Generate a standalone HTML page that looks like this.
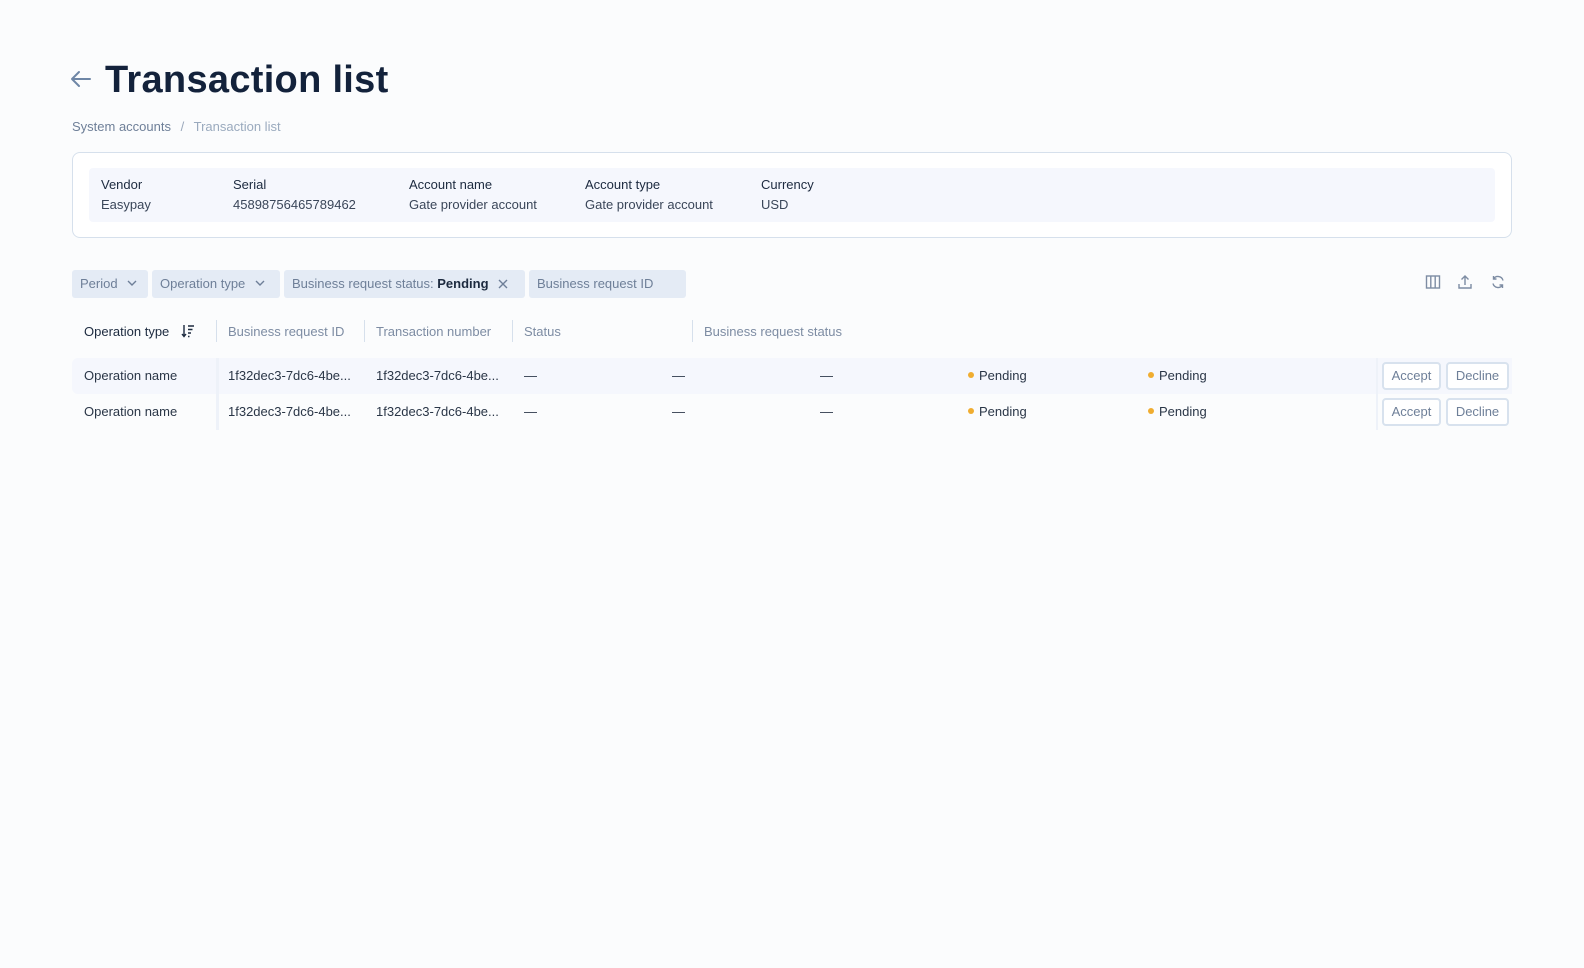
<!DOCTYPE html>
<html><head><meta charset="utf-8"><style>
*{box-sizing:border-box;margin:0;padding:0}
body{width:1584px;height:968px;background:#fbfcfd;font-family:"Liberation Sans",sans-serif;color:#1c2a3f;position:relative;overflow:hidden}
.abs{position:absolute;white-space:nowrap}
h1{position:absolute;left:105px;top:59px;font-size:38px;font-weight:700;color:#13223b;letter-spacing:0.3px}
.bc{font-size:13px;color:#6e7f98}
.card{position:absolute;left:72px;top:152px;width:1440px;height:86px;border:1.5px solid #d6e0ec;border-radius:8px;background:#fff}
.inner{position:absolute;left:16px;top:15px;right:16px;height:54px;background:#f5f7fd;border-radius:4px}
.lbl{font-size:13px;color:#1c2a3f}
.val{font-size:13px;color:#3a4659}
.chip{position:absolute;top:270px;height:28px;background:#e4ebf5;border-radius:3px;font-size:13px;color:#6e7f98;line-height:28px;padding-left:8px;white-space:nowrap}
.th{font-size:13px;color:#7d8ca3;top:324px}
.sep{position:absolute;top:320px;width:1px;height:22px;background:#d6e0ec}
.row{position:absolute;left:72px;width:1440px;height:36px}
.td{font-size:13px;color:#2a3647}
.dot{display:inline-block;width:6px;height:6px;border-radius:50%;background:#f0ad30;margin-right:5px;vertical-align:2px}
.btn{position:absolute;height:28px;border:2px solid #d8e2ee;border-radius:4px;background:#fff;font-size:13px;color:#6e7f98;line-height:24px;text-align:center}
</style></head><body>
<svg class="abs" style="left:70px;top:70px" width="22" height="18" viewBox="0 0 22 18"><path d="M20 9H3M9 2L2 9l7 7" fill="none" stroke="#6e86a6" stroke-width="2" stroke-linecap="round" stroke-linejoin="round"/></svg>
<h1>Transaction list</h1>
<div class="abs bc" style="left:72px;top:119px">System accounts <span style="margin:0 6px;color:#9aa8bb">/</span> <span style="color:#9aaabe">Transaction list</span></div>
<div class="card"><div class="inner">
<div class="abs lbl" style="left:12px;top:9px">Vendor</div><div class="abs val" style="left:12px;top:29px">Easypay</div>
<div class="abs lbl" style="left:144px;top:9px">Serial</div><div class="abs val" style="left:144px;top:29px">45898756465789462</div>
<div class="abs lbl" style="left:320px;top:9px">Account name</div><div class="abs val" style="left:320px;top:29px">Gate provider account</div>
<div class="abs lbl" style="left:496px;top:9px">Account type</div><div class="abs val" style="left:496px;top:29px">Gate provider account</div>
<div class="abs lbl" style="left:672px;top:9px">Currency</div><div class="abs val" style="left:672px;top:29px">USD</div>
</div></div>
<div class="chip" style="left:72px;width:76px">Period <svg width="10" height="6" style="margin-left:6px;vertical-align:2px"><path d="M1 1l4 4 4-4" fill="none" stroke="#6e7f98" stroke-width="1.4"/></svg></div>
<div class="chip" style="left:152px;width:128px">Operation type <svg width="10" height="6" style="margin-left:6px;vertical-align:2px"><path d="M1 1l4 4 4-4" fill="none" stroke="#6e7f98" stroke-width="1.4"/></svg></div>
<div class="chip" style="left:284px;width:241px">Business request status: <span style="color:#1c2a3f;font-weight:700">Pending</span> <svg width="10" height="10" style="margin-left:6px;vertical-align:-1px"><path d="M1 1l8 8M9 1l-8 8" stroke="#6e7f98" stroke-width="1.4"/></svg></div>
<div class="chip" style="left:529px;width:157px">Business request ID</div>
<svg class="abs" style="left:1425px;top:274px" width="16" height="16" viewBox="0 0 16 16"><rect x="1.5" y="2" width="13" height="12" fill="none" stroke="#7d8ca3" stroke-width="1.4"/><path d="M5.8 2v12M10.2 2v12" stroke="#7d8ca3" stroke-width="1.4"/></svg>
<svg class="abs" style="left:1457px;top:274px" width="16" height="16" viewBox="0 0 16 16"><path d="M8 11V2M4.5 5.5L8 2l3.5 3.5M2 10v4h12v-4" fill="none" stroke="#7d8ca3" stroke-width="1.4"/></svg>
<svg class="abs" style="left:1490px;top:274px" width="16" height="16" viewBox="0 0 16 16"><path d="M13 6.5A5.2 5.2 0 0 0 3.5 5M3 9.5A5.2 5.2 0 0 0 12.5 11M3.5 2v3h3M12.5 14v-3h-3" fill="none" stroke="#7d8ca3" stroke-width="1.4"/></svg>
<div class="abs th" style="left:84px;color:#1c2a3f">Operation type</div>
<svg class="abs" style="left:181px;top:324px" width="14" height="14" viewBox="0 0 14 14"><path d="M3 1v11M1 10l2 2.5L5 10M7 2h6M7 5.5h4.5M7 9h3M7 12.5h1.5" fill="none" stroke="#1c2a3f" stroke-width="1.4"/></svg>
<div class="sep" style="left:216px"></div><div class="abs th" style="left:228px">Business request ID</div>
<div class="sep" style="left:364px"></div><div class="abs th" style="left:376px">Transaction number</div>
<div class="sep" style="left:512px"></div><div class="abs th" style="left:524px">Status</div>
<div class="sep" style="left:692px"></div><div class="abs th" style="left:704px">Business request status</div>
<div class="row" style="top:358px;background:#f5f7fd;border-radius:6px 0 0 6px"></div>
<div class="abs" style="left:216px;top:358px;width:3px;height:72px;background:#eef2f9"></div>
<div class="abs" style="left:1376px;top:358px;width:2px;height:72px;background:#eef2f9"></div>
<div class="abs td" style="left:84px;top:368px">Operation name</div><div class="abs td" style="left:228px;top:368px">1f32dec3-7dc6-4be...</div><div class="abs td" style="left:376px;top:368px">1f32dec3-7dc6-4be...</div><div class="abs td" style="left:524px;top:368px">—</div><div class="abs td" style="left:672px;top:368px">—</div><div class="abs td" style="left:820px;top:368px">—</div><div class="abs td" style="left:968px;top:368px"><span class="dot"></span>Pending</div><div class="abs td" style="left:1148px;top:368px"><span class="dot"></span>Pending</div>
<div class="btn" style="left:1382px;top:362px;width:59px">Accept</div><div class="btn" style="left:1446px;top:362px;width:63px">Decline</div>
<div class="abs td" style="left:84px;top:404px">Operation name</div><div class="abs td" style="left:228px;top:404px">1f32dec3-7dc6-4be...</div><div class="abs td" style="left:376px;top:404px">1f32dec3-7dc6-4be...</div><div class="abs td" style="left:524px;top:404px">—</div><div class="abs td" style="left:672px;top:404px">—</div><div class="abs td" style="left:820px;top:404px">—</div><div class="abs td" style="left:968px;top:404px"><span class="dot"></span>Pending</div><div class="abs td" style="left:1148px;top:404px"><span class="dot"></span>Pending</div>
<div class="btn" style="left:1382px;top:398px;width:59px">Accept</div><div class="btn" style="left:1446px;top:398px;width:63px">Decline</div>
</body></html>
